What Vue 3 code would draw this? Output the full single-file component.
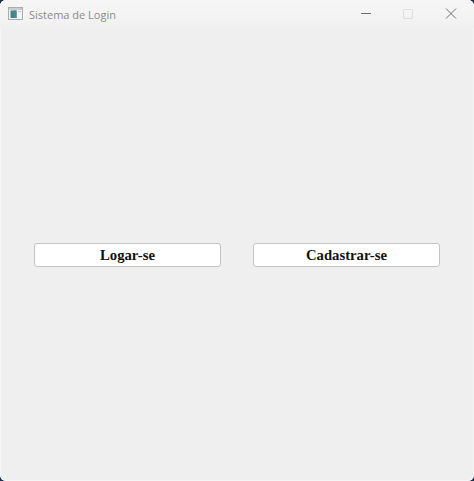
<script setup>
const buttons = ['Logar-se', 'Cadastrar-se']
</script>

<template>
  <div class="window">
    <header class="titlebar">
      <svg class="app-icon" width="16" height="14" viewBox="0 0 16 14">
        <rect x="0.5" y="0.5" width="14" height="12" fill="#f4f5f5" stroke="#a9adb0" />
        <rect x="1" y="1" width="13" height="2" fill="#c9cdd0" />
        <rect x="2.5" y="3.5" width="6" height="7.5" fill="#3f8a80" />
        <rect x="6" y="3.5" width="2.5" height="7.5" fill="#5a7f98" />
        <rect x="10" y="4" width="3" height="1" fill="#c3c7ca" />
      </svg>
      <span class="title">Sistema de Login</span>
      <div class="controls">
        <svg class="control" width="43" height="28" viewBox="0 0 43 28">
          <path d="M18 13.5H28" stroke="#6e6e6e" stroke-width="1" />
        </svg>
        <svg class="control" width="43" height="28" viewBox="0 0 43 28">
          <rect x="17.5" y="9.5" width="9" height="9" rx="1" fill="none" stroke="#dcdcdc" />
        </svg>
        <svg class="control" width="43" height="28" viewBox="0 0 43 28">
          <path d="M17 8.5L27 18.5M27 8.5L17 18.5" stroke="#707070" stroke-width="1" />
        </svg>
      </div>
    </header>
    <main class="content">
      <button v-for="label in buttons" :key="label" class="action">{{ label }}</button>
    </main>
  </div>
</template>

<style scoped>
.window {
  width: 474px;
  height: 481px;
  border-radius: 6px;
  overflow: hidden;
  background: #efefef;
  display: flex;
  flex-direction: column;
  box-sizing: border-box;
  box-shadow: inset 0 0 0 1px #f5f5f5;
}
.titlebar {
  height: 28px;
  flex: none;
  display: flex;
  align-items: center;
  padding: 0 2px 0 8px;
  background: linear-gradient(#f6f6f6, #f2f2f2 80%, #efefef);
}
.app-icon {
  flex: none;
}
.title {
  margin-left: 5px;
  font-family: "Open Sans", "Noto Sans", sans-serif;
  font-size: 11px;
  color: #8b8b8b;
  white-space: nowrap;
}
.controls {
  margin-left: auto;
  display: flex;
}
.control {
  display: block;
  flex: none;
}
.content {
  flex: 1;
  display: flex;
  align-items: flex-start;
  gap: 32px;
  padding: 215px 0 0 34px;
}
.action {
  width: 187px;
  height: 24px;
  box-sizing: border-box;
  padding: 0;
  background: #fff;
  border: 1px solid #c4c4c4;
  border-radius: 3px;
  font-family: "Liberation Serif", "Times New Roman", serif;
  font-weight: 700;
  font-size: 14.7px;
  color: #111;
}
</style>

<style>
html, body {
  margin: 0;
  background: #1d2f52;
}
</style>
